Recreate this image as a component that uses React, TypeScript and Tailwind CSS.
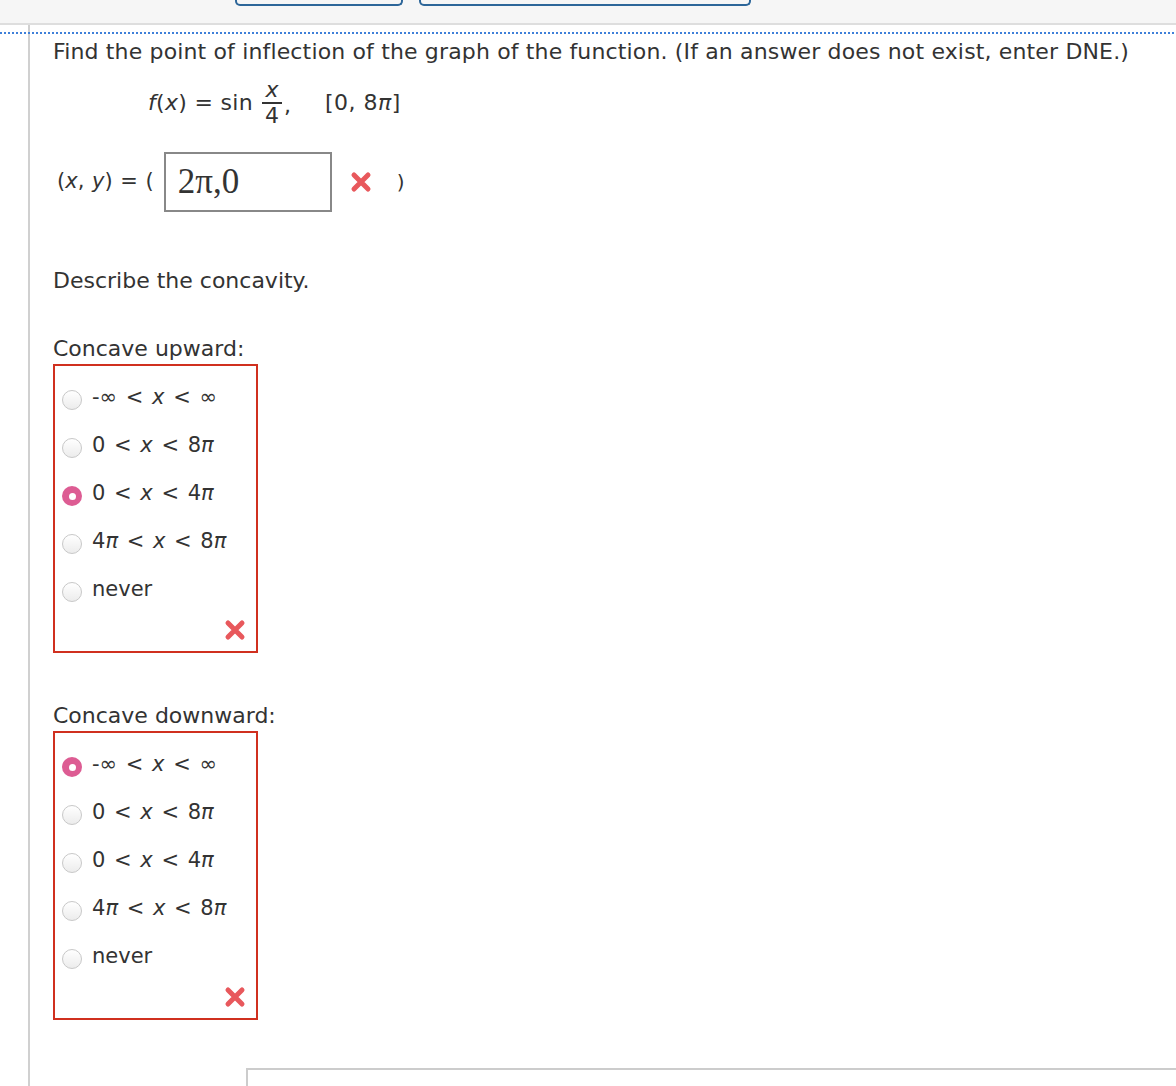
import React from "react";

const font = { fontFamily: '"DejaVu Sans", Verdana, sans-serif' };

function RedX({ className = "" }: { className?: string }) {
  return (
    <svg width="24" height="22" viewBox="0 0 24 22" className={className}>
      <path d="M5 4 L19 18 M19 4 L5 18" stroke="#e8585c" strokeWidth="5" strokeLinecap="round" />
    </svg>
  );
}

function Radio({ checked }: { checked?: boolean }) {
  if (checked) {
    return (
      <span className="block w-[20px] h-[20px] rounded-full bg-[#dd5c93] flex items-center justify-center shrink-0">
        <span className="block w-[7px] h-[7px] rounded-full bg-white" />
      </span>
    );
  }
  return (
    <span className="block w-[20px] h-[20px] rounded-full border border-[#c8c8c8] bg-gradient-to-b from-white to-[#ececec] shrink-0" />
  );
}

type Opt = { key: string; label: React.ReactNode };

const options: Opt[] = [
  { key: "all", label: <>-∞ &lt; <i>x</i> &lt; ∞</> },
  { key: "08", label: <>0 &lt; <i>x</i> &lt; 8<i>π</i></> },
  { key: "04", label: <>0 &lt; <i>x</i> &lt; 4<i>π</i></> },
  { key: "48", label: <>4<i>π</i> &lt; <i>x</i> &lt; 8<i>π</i></> },
  { key: "never", label: <>never</> },
];

function RadioBox({ selected }: { selected: string }) {
  return (
    <div className="w-[205px] h-[289px] border-2 border-[#d0301f] relative pt-[21px]">
      <div className="flex flex-col gap-[26px]">
        {options.map((o) => (
          <div key={o.key} className="flex items-center h-[22px] pl-[7px]">
            <span className="mt-[4px]">
              <Radio checked={o.key === selected} />
            </span>
            <span className="ml-[10px] text-[21px] text-[#333] whitespace-pre" style={{ wordSpacing: "2px" }}>
              {o.label}
            </span>
          </div>
        ))}
      </div>
      <RedX className="absolute right-[9px] bottom-[10px]" />
    </div>
  );
}

export default function App() {
  return (
    <div className="w-[1176px] h-[1086px] bg-white overflow-hidden text-[#333]" style={font}>
      {/* top bar */}
      <div className="h-[25px] bg-[#f6f6f6] border-b-2 border-[#dedede] flex">
        <div className="ml-[235px] w-[168px] h-[6px] border-2 border-t-0 border-[#2d6699] rounded-b-[5px]" />
        <div className="ml-[16px] w-[332px] h-[6px] border-2 border-t-0 border-[#2d6699] rounded-b-[5px]" />
      </div>
      <div className="ml-[28px] border-l-2 border-[#d0d0d0] h-[1061px] relative">
        <div className="absolute left-[-30px] right-0 top-[7px] h-[2px] bg-[linear-gradient(to_right,#3f80d9_50%,transparent_50%)] bg-[length:4px_2px]" />
        <div className="pl-[23px] pt-[13px]">
          <p className="text-[22px] leading-[28px] tracking-[0.15px]">
            Find the point of inflection of the graph of the function. (If an answer does not exist, enter DNE.)
          </p>
          <div className="ml-[95px] mt-[8px] flex items-center text-[22px] h-[56px]">
            <span className="tracking-[0.3px]"><i>f</i>(<i>x</i>) = sin</span>
            <span className="inline-flex flex-col items-center ml-[9px] leading-[23px]">
              <i className="pb-[1px]">x</i>
              <span className="border-t-2 border-[#333] w-[20px] text-center">4</span>
            </span>
            <span className="ml-[2px] mt-[6px]">,</span>
            <span className="ml-[34px] tracking-[0.5px]">[0, 8<i>π</i>]</span>
          </div>
          <div className="mt-[22px] flex items-center h-[60px]">
            <span className="text-[21px] ml-[4px]" style={{ wordSpacing: "1px" }}>
              (<i>x</i>, <i>y</i>) = (
            </span>
            <div className="ml-[10px] w-[168px] h-[60px] border-2 border-[#888] pl-[12px] flex items-start pt-[2px]">
              <span className="text-[35px] text-[#333]" style={{ fontFamily: '"Liberation Serif", "Times New Roman", serif' }}>
                2π,0
              </span>
            </div>
            <RedX className="ml-[17px]" />
            <span className="ml-[24px] text-[20px]">)</span>
          </div>
          <p className="mt-[55px] text-[22px] leading-[28px]">Describe the concavity.</p>
          <p className="mt-[40px] text-[22px] leading-[28px]">Concave upward:</p>
          <div className="mt-[1px]">
            <RadioBox selected="04" />
          </div>
          <p className="mt-[49px] text-[22px] leading-[28px]">Concave downward:</p>
          <div className="mt-[1px]">
            <RadioBox selected="all" />
          </div>
        </div>
        <div className="absolute left-[216px] top-[1043px] right-0 h-[40px] border-l-2 border-t-2 border-[#cccccc]" />
      </div>
    </div>
  );
}
